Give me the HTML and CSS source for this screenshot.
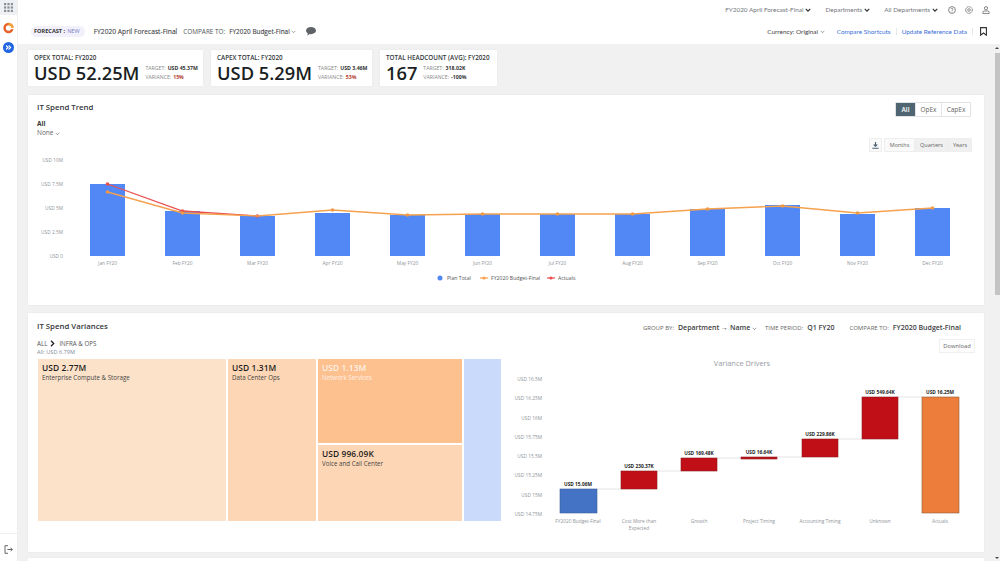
FILE: index.html
```html
<!DOCTYPE html>
<html lang="en">
<head>
<meta charset="utf-8">
<title>IT Spend</title>
<link rel="stylesheet" href="styles.css">
</head>
<body>
<div class="app">
  <aside class="side">
    <div class="side-top">
      <svg width="9" height="9" viewBox="0 0 9 9"><g fill="#8a8f98"><rect x="0" y="0" width="2.2" height="2.2"/><rect x="3.4" y="0" width="2.2" height="2.2"/><rect x="6.8" y="0" width="2.2" height="2.2"/><rect x="0" y="3.4" width="2.2" height="2.2"/><rect x="3.4" y="3.4" width="2.2" height="2.2"/><rect x="6.8" y="3.4" width="2.2" height="2.2"/><rect x="0" y="6.8" width="2.2" height="2.2"/><rect x="3.4" y="6.8" width="2.2" height="2.2"/><rect x="6.8" y="6.8" width="2.2" height="2.2"/></g></svg>
    </div>
    <svg class="logo" width="11" height="12" viewBox="0 0 11 12"><circle cx="5.500" cy="6" r="3.900" fill="none" stroke="#e8622c" stroke-width="2.500"/><path d="M5.500 2.100A3.900 3.900 0 0 1 9.400 6" fill="none" stroke="#f2a33a" stroke-width="2.500"/><path d="M7.500 6.500h3.500" stroke="#fff" stroke-width="1.200"/></svg>
    <svg class="go" width="11" height="11" viewBox="0 0 11 11"><circle cx="5.500" cy="5.500" r="5.500" fill="#1f64e0"/><path d="M3 3.500l2 2-2 2M5.600 3.500l2 2-2 2" fill="none" stroke="#fff" stroke-width="1.100"/></svg>
    <div class="side-foot">
      <svg width="9" height="9" viewBox="0 0 9 9"><path d="M4 .7H1v7.600h3" fill="none" stroke="#666" stroke-width="1"/><path d="M3.400 4.500h5M6.600 2.900l1.800 1.600-1.800 1.600" fill="none" stroke="#666" stroke-width="1"/></svg>
    </div>
  </aside>
  <div class="body">
    <header class="top">
      <nav class="top-row">
        <span class="nav-item">FY2020 April Forecast-Final <svg class="chev-b" viewBox="0 0 8 5"><path d="M1 1l3 3 3-3"/></svg></span>
        <span class="nav-item">Departments <svg class="chev-b" viewBox="0 0 8 5"><path d="M1 1l3 3 3-3"/></svg></span>
        <span class="nav-item">All Departments <svg class="chev-b" viewBox="0 0 8 5"><path d="M1 1l3 3 3-3"/></svg></span>
        <span class="nav-icons">
          <svg width="8" height="8" viewBox="0 0 8 8"><circle cx="4" cy="4" r="3.400" fill="none" stroke="#666" stroke-width=".8"/><path d="M3 3.200a1 1 0 1 1 1.400 1L4 4.800M4 5.600v.7" fill="none" stroke="#666" stroke-width=".7"/></svg>
          <svg width="8" height="8" viewBox="0 0 8 8"><circle cx="4" cy="4" r="3.300" fill="none" stroke="#777" stroke-width="1" stroke-dasharray="1.600 .5"/><circle cx="4" cy="4" r="1.300" fill="none" stroke="#777" stroke-width=".8"/></svg>
          <svg width="8" height="8" viewBox="0 0 8 8"><circle cx="4" cy="2.200" r="1.600" fill="none" stroke="#666" stroke-width=".8"/><path d="M.8 7.600V6.400q0-1.400 1.400-1.400h3.600q1.400 0 1.400 1.400v1.200z" fill="none" stroke="#666" stroke-width=".8"/></svg>
        </span>
      </nav>
      <div class="top-row2">
        <div class="ctx">
          <span class="pill"><b>FORECAST :</b> <em>NEW</em></span>
          <span class="ctx-name">FY2020 April Forecast-Final</span>
          <span class="ctx-label">COMPARE TO:</span>
          <span class="ctx-val">FY2020 Budget-Final <svg class="chev" viewBox="0 0 8 5"><path d="M1 1l3 3 3-3"/></svg></span>
          <svg class="bubble" width="10" height="9" viewBox="0 0 10 9"><path d="M5 0c2.800 0 5 1.600 5 3.600S7.800 7.200 5 7.200c-.5 0-1 0-1.500-.2L1.300 8.700l.5-2.300C.7 5.700 0 4.700 0 3.600 0 1.600 2.200 0 5 0z" fill="#5f6368"/></svg>
        </div>
        <div class="actions">
          <span class="currency">Currency: Original <svg class="chev" viewBox="0 0 8 5"><path d="M1 1l3 3 3-3"/></svg></span>
          <a class="link first">Compare Shortcuts</a>
          <a class="link sep">Update Reference Data</a>
          <svg class="bm" width="7" height="9" viewBox="0 0 7 9"><path d="M.6.6h5.800v7.600L3.500 6 .6 8.200z" fill="none" stroke="#333" stroke-width="1.100"/></svg>
        </div>
      </div>
    </header>
    <div class="view">
      <main class="content">
        <section class="kpis">
          <article class="kpi kpi-a">
            <h3>OPEX TOTAL: FY2020</h3>
            <div class="kpi-row"><strong>USD 52.25M</strong><dl><div><dt>TARGET:</dt><dd>USD 45.37M</dd></div><div><dt>VARIANCE:</dt><dd class="neg">15%</dd></div></dl></div>
          </article>
          <article class="kpi kpi-b">
            <h3>CAPEX TOTAL: FY2020</h3>
            <div class="kpi-row"><strong>USD 5.29M</strong><dl><div><dt>TARGET:</dt><dd>USD 3.46M</dd></div><div><dt>VARIANCE:</dt><dd class="neg">53%</dd></div></dl></div>
          </article>
          <article class="kpi kpi-c">
            <h3>TOTAL HEADCOUNT (AVG): FY2020</h3>
            <div class="kpi-row"><strong>167</strong><dl><div><dt>TARGET:</dt><dd>318.02K</dd></div><div><dt>VARIANCE:</dt><dd>-100%</dd></div></dl></div>
          </article>
        </section>

        <section class="panel trend">
          <div class="trend-head">
            <div class="trend-title">
              <h2>IT Spend Trend</h2>
              <div class="filter"><b>All</b><span>None <svg class="chev" viewBox="0 0 8 5"><path d="M1 1l3 3 3-3"/></svg></span></div>
            </div>
            <div class="trend-ctrl">
              <div class="seg"><span class="on">All</span><span class="s-op">OpEx</span><span class="s-cap">CapEx</span></div>
              <div class="time">
                <span class="dl"><svg width="7" height="7" viewBox="0 0 7 7"><path d="M3.500 0v4M1.700 2.500l1.800 1.800 1.800-1.800M.3 6.300h6.400" fill="none" stroke="#4c6473" stroke-width="1.100"/></svg></span>
                <span class="t-seg t-m">Months</span><span class="t-seg t-on t-q">Quarters</span><span class="t-seg t-on t-y">Years</span>
              </div>
            </div>
          </div>
          <svg class="chart" width="956" height="155" viewBox="28 150 956 155">
            <g class="ax" text-anchor="end">
              <text x="63" y="162">USD 10M</text><text x="63" y="186">USD 7.5M</text><text x="63" y="210">USD 5M</text><text x="63" y="234">USD 2.5M</text><text x="63" y="258">USD 0</text>
            </g>
            <g fill="#5288f5">
              <rect x="90" y="184" width="35" height="72"/><rect x="165" y="211" width="35" height="45"/><rect x="240" y="216" width="35" height="40"/><rect x="315" y="213" width="35" height="43"/><rect x="390" y="215" width="35" height="41"/><rect x="465" y="214" width="35" height="42"/><rect x="540" y="214" width="35" height="42"/><rect x="615" y="214" width="35" height="42"/><rect x="690" y="209" width="35" height="47"/><rect x="765" y="205" width="35" height="51"/><rect x="840" y="214" width="35" height="42"/><rect x="915" y="208" width="35" height="48"/>
            </g>
            <polyline points="107.500,184 182.500,211 257.500,216" fill="none" stroke="#e9504f" stroke-width="1.300"/>
            <g fill="#e9504f"><circle cx="107.500" cy="184" r="1.800"/><circle cx="182.500" cy="211" r="1.800"/><circle cx="257.500" cy="216" r="1.800"/></g>
            <polyline points="107.500,192 182.500,213 257.500,216 332.500,210 407.500,215 482.500,214 557.500,214 632.500,214 707.500,209 782.500,206 857.500,213 932.500,208" fill="none" stroke="#f5a14e" stroke-width="1.300"/>
            <g fill="#f09a45"><circle cx="107.500" cy="192" r="1.800"/><circle cx="182.500" cy="213" r="1.800"/><circle cx="332.500" cy="210" r="1.800"/><circle cx="407.500" cy="215" r="1.800"/><circle cx="482.500" cy="214" r="1.800"/><circle cx="557.500" cy="214" r="1.800"/><circle cx="632.500" cy="214" r="1.800"/><circle cx="707.500" cy="209" r="1.800"/><circle cx="782.500" cy="206" r="1.800"/><circle cx="857.500" cy="213" r="1.800"/><circle cx="932.500" cy="208" r="1.800"/></g>
            <g class="ax" text-anchor="middle">
              <text x="107.500" y="265">Jan FY20</text><text x="182.500" y="265">Feb FY20</text><text x="257.500" y="265">Mar FY20</text><text x="332.500" y="265">Apr FY20</text><text x="407.500" y="265">May FY20</text><text x="482.500" y="265">Jun FY20</text><text x="557.500" y="265">Jul FY20</text><text x="632.500" y="265">Aug FY20</text><text x="707.500" y="265">Sep FY20</text><text x="782.500" y="265">Oct FY20</text><text x="857.500" y="265">Nov FY20</text><text x="932.500" y="265">Dec FY20</text>
            </g>
            <circle cx="440" cy="278" r="2.500" fill="#5288f5"/>
            <path d="M480 278h8" stroke="#f5a14e" stroke-width="1.200"/><circle cx="484" cy="278" r="1.600" fill="#f5a14e"/>
            <path d="M547 278h8" stroke="#e9504f" stroke-width="1.200"/><circle cx="551" cy="278" r="1.600" fill="#e9504f"/>
            <g class="leg"><text x="447" y="280">Plan Total</text><text x="491" y="280">FY2020 Budget-Final</text><text x="558" y="280">Actuals</text></g>
          </svg>
        </section>

        <section class="panel var">
          <div class="var-head">
            <h2>IT Spend Variances</h2>
            <div class="var-opts">
              <span class="o-l">GROUP BY:</span><span class="o-v o-big">Department → Name <svg class="chev" viewBox="0 0 8 5"><path d="M1 1l3 3 3-3"/></svg></span>
              <span class="o-l o-gap">TIME PERIOD:</span><span class="o-v">Q1 FY20</span>
              <span class="o-l o-gap2">COMPARE TO:</span><span class="o-v">FY2020 Budget-Final</span>
            </div>
          </div>
          <div class="var-body">
            <div class="tree-col">
              <div class="crumb">ALL <svg class="crumb-c" viewBox="0 0 5 7"><path d="M1 .8l2.700 2.700L1 6.200"/></svg> <span>INFRA &amp; OPS</span></div>
              <div class="crumb-sub">All: USD 6.79M</div>
              <div class="tree">
                <div class="cell c1"><b>USD 2.77M</b><span>Enterprise Compute &amp; Storage</span></div>
                <div class="cell c2"><b>USD 1.31M</b><span>Data Center Ops</span></div>
                <div class="tree-stack">
                  <div class="cell c3"><b>USD 1.13M</b><span>Network Services</span></div>
                  <div class="cell c4"><b>USD 996.09K</b><span>Voice and Call Center</span></div>
                </div>
                <div class="cell c5"></div>
              </div>
            </div>
            <div class="wf-col">
              <div class="dl-row"><button class="dl-btn" type="button">Download</button></div>
              <svg class="chart" width="479" height="199" viewBox="505 353 479 199">
                <text class="wf-title" x="742" y="366" text-anchor="middle">Variance Drivers</text>
                <g class="ax" text-anchor="end">
                  <text x="542" y="381">USD 16.5M</text><text x="542" y="400">USD 16.25M</text><text x="542" y="420">USD 16M</text><text x="542" y="439">USD 15.75M</text><text x="542" y="458">USD 15.5M</text><text x="542" y="477">USD 15.25M</text><text x="542" y="497">USD 15M</text><text x="542" y="516">USD 14.75M</text>
                </g>
                <path d="M597 489h24M657 471h24M717 458h24M777 457h25M838 439h24M898 397h24" stroke="#ddd" stroke-width=".8"/>
                <rect x="560" y="489" width="37" height="24" fill="#4472c4" stroke="#3a5f9f" stroke-width=".6"/>
                <g fill="#c00f16" stroke="#8e1b1f" stroke-width=".6">
                  <rect x="621" y="471" width="36" height="18"/><rect x="681" y="458" width="36" height="13"/><rect x="741" y="457" width="36" height="2"/><rect x="802" y="439" width="36" height="18"/><rect x="862" y="397" width="36" height="42"/>
                </g>
                <rect x="922" y="397" width="37" height="116" fill="#ed7d3a" stroke="#8e5a3a" stroke-width=".6"/>
                <g class="wf-v" text-anchor="middle">
                  <text x="578" y="486">USD 15.06M</text><text x="639" y="468">USD 230.37K</text><text x="699" y="455">USD 169.48K</text><text x="759" y="454">USD 16.64K</text><text x="820" y="436">USD 229.86K</text><text x="880" y="394">USD 549.64K</text><text x="940" y="394">USD 16.25M</text>
                </g>
                <g class="ax" text-anchor="middle">
                  <text x="578" y="523">FY2020 Budget-Final</text><text x="639" y="523">Cost More than</text><text x="639" y="530">Expected</text><text x="699" y="523">Growth</text><text x="759" y="523">Project Timing</text><text x="820" y="523">Accounting Timing</text><text x="880" y="523">Unknown</text><text x="940" y="523">Actuals</text>
                </g>
              </svg>
            </div>
          </div>
        </section>
        <section class="panel next"></section>
      </main>
      <div class="sbar">
        <i class="arr up"></i>
        <div class="thumb"></div>
        <i class="arr down"></i>
      </div>
    </div>
  </div>
</div>
</body>
</html>
```
FILE: styles.css
```css
* { box-sizing: border-box; }
html, body { margin: 0; height: 100%; overflow: hidden; }
body { font-family: "Open Sans", "Liberation Sans", sans-serif; color: #2b2f33; background: #fff; }
h2, h3 { margin: 0; }
.app { display: flex; height: 561px; }

.side { width: 18px; flex: none; display: flex; flex-direction: column; align-items: center; background: #fff; border-right: 1px solid #eee; }
.side-top { width: 100%; height: 15px; background: #eef0f3; display: flex; align-items: center; justify-content: center; }
.logo { margin-top: 7px; }
.go { margin-top: 8px; }
.side-foot { margin-top: auto; width: 100%; height: 28px; border-top: 1px solid #eee; display: flex; align-items: center; justify-content: center; padding-top: 4px; }

.body { flex: 1; min-width: 0; display: flex; flex-direction: column; }
.top { height: 44px; flex: none; background: #fff; font-family: Lato, "Liberation Sans", sans-serif; }
.top-row { height: 19px; display: flex; align-items: center; justify-content: flex-end; padding-right: 10px; font-size: 6.400px; color: #73777c; }
.nav-item { margin-left: 14px; display: inline-flex; align-items: center; gap: 2px; }
.chev-b { width: 6px; height: 4px; fill: none; stroke: #333; stroke-width: 1.600; }
.nav-icons { display: inline-flex; gap: 9px; margin-left: 10px; }
.nav-icons svg { display: block; }
.top-row2 { height: 25px; display: flex; align-items: flex-start; justify-content: space-between; padding: 5px 13px 0 13px; }
.ctx, .actions { display: flex; align-items: center; height: 14px; white-space: nowrap; }
.pill { background: #f2f0fa; border-radius: 7px; padding: 0 5px 0 3px; height: 11px; font: 5.600px/11px "Open Sans", sans-serif; display: inline-flex; gap: 2px; color: #333; }
.pill b { font-weight: 700; }
.pill em { font-style: normal; color: #7b7fc9; }
.ctx-name { font: 6.700px "Open Sans", sans-serif; -webkit-text-stroke: .1px #3c4043; margin-left: 9px; color: #3c4043; }
.ctx-label { font: 6.400px "Open Sans", sans-serif; margin-left: 6px; color: #50555a; }
.ctx-val { font: 6.400px "Open Sans", sans-serif; -webkit-text-stroke: .1px #3c4043; margin-left: 4px; color: #3c4043; }
.chev { width: 5px; height: 3.500px; fill: none; stroke: #666; stroke-width: 1; }
.bubble { margin-left: 10px; }
.currency { font-size: 6.400px; color: #3c4043; margin-right: 12px; }
.link { font-size: 6.400px; color: #3b6fd8; padding-right: 5px; border-right: 1px solid #e8e8e8; }
.first { margin-right: 5px; }
.sep { margin-right: 7px; }
.bm { display: block; }

.view { flex: 1; min-height: 0; display: flex; background: #f1f1f1; }
.content { flex: 1; min-width: 0; padding: 6px 10px 0; overflow: hidden; }

.kpis { display: flex; gap: 8px; height: 36px; }
.kpi { background: #fff; padding: 3px 5px 0 6px; box-shadow: 0 0 2px rgba(0,0,0,.06); }
.kpi-a { width: 175px; }
.kpi-b { width: 161px; }
.kpi-c { width: 117px; }
.kpi h3 { font-size: 6.300px; line-height: 9px; font-weight: 600; color: #33373b; white-space: nowrap; }
.kpi-row { display: flex; align-items: center; gap: 6px; height: 20px; margin-top: 1px; }
.kpi strong { font-size: 18.300px; line-height: 20px; font-weight: 600; color: #1b1f23; white-space: nowrap; }
.kpi dl { margin: 0; font-size: 5.200px; line-height: 9px; }
.kpi dl div { display: flex; gap: 2px; white-space: nowrap; }
.kpi dt { color: #888; }
.kpi dd { margin: 0; font-weight: 700; color: #333; }
.kpi dd.neg { color: #b5412f; }

.panel { background: #fff; box-shadow: 0 0 2px rgba(0,0,0,.05); }
.panel h2 { font-size: 7.800px; font-weight: 600; color: #33373b; line-height: 12px; white-space: nowrap; }
.trend { margin-top: 9px; height: 210px; }
.trend-head { height: 55px; display: flex; justify-content: space-between; padding: 6px 12px 0 9px; }
.filter { margin-top: 6px; display: flex; flex-direction: column; font-size: 6.500px; line-height: 9px; color: #666; }
.filter b { font-weight: 700; color: #333; }
.trend-ctrl { display: flex; flex-direction: column; align-items: flex-end; }
.seg { display: flex; height: 15px; margin-top: 1px; margin-right: 1px; border: 1px solid #dfe3e6; border-radius: 1px; font-size: 6.500px; color: #666; }
.seg span { text-align: center; line-height: 13px; border-left: 1px solid #e4e7e9; }
.seg .on { width: 19px; background: #4f6672; color: #fff; font-weight: 600; border-left: 0; }
.seg .s-op { width: 26px; }
.seg .s-cap { width: 29px; }
.time { display: flex; height: 14px; margin-top: 21px; font-size: 5.500px; color: #666; }
.dl { width: 13px; display: flex; align-items: center; justify-content: center; background: #fafafa; border: 1px solid #eee; margin-right: 2px; }
.t-seg { text-align: center; line-height: 12px; border: 1px solid #eee; background: #fafafa; }
.t-m { width: 31px; }
.t-q { width: 33px; }
.t-y { width: 24px; }
.t-on { background: #f0f0f0; }
.chart { display: block; }
.ax text, .ax { font-size: 4.800px; fill: #8f9498; }
.leg text { font-size: 5.200px; fill: #555; }

.var { margin-top: 8px; height: 239px; position: relative; }
.var-head { height: 22px; display: flex; justify-content: space-between; align-items: flex-end; padding: 0 23px 0 9px; }
.var-head h2 { margin-bottom: 3px; }
.var-opts { display: flex; align-items: center; margin-bottom: 3px; white-space: nowrap; }
.o-l { font-size: 6px; color: #666; margin-right: 4px; }
.o-v { font-size: 7px; font-weight: 600; color: #3c4043; }
.o-gap { margin-left: 8px; }
.o-gap2 { margin-left: 15px; }
.var-body { display: flex; padding-left: 10px; }
.tree-col { width: 463px; flex: none; padding-top: 3px; }
.crumb { font-size: 6.200px; line-height: 9px; color: #555; display: flex; align-items: center; gap: 3px; height: 10px; margin-left: -1px; }
.crumb span { margin-left: 1px; }
.crumb-c { width: 5px; height: 7px; fill: none; stroke: #222; stroke-width: 1.300; }
.crumb-sub { font-size: 5.600px; line-height: 8px; color: #7d8a99; margin-left: -1px; }
.tree { display: flex; gap: 2px; height: 162px; margin-top: 3px; }
.tree-stack { width: 144px; display: flex; flex-direction: column; gap: 2px; }
.cell { padding: 4px; display: flex; flex-direction: column; }
.cell b { font-size: 8.400px; line-height: 10px; font-weight: 600; color: #1e1e1e; letter-spacing: .1px; }
.cell span { font-size: 6.200px; line-height: 9px; color: #444; white-space: nowrap; }
.c1 { width: 188px; background: #fde2ca; }
.c2 { width: 88px; background: #fdd7b5; }
.c3 { height: 84px; background: #fdc08f; }
.c3 b, .c3 span { color: #fdf1e6; }
.c4 { flex: 1; background: #fdd7b5; }
.c5 { width: 37px; background: #c9dafb; }
.wf-col { width: 479px; flex: none; margin-left: 4px; }
.dl-row { height: 18px; display: flex; justify-content: flex-end; padding: 4px 9px 0 0; }
.dl-btn { width: 36px; height: 14px; padding: 0; background: #fdfdfd; border: 1px solid #eef0f2; font: 5.800px "Open Sans", sans-serif; color: #666; }
.wf-title { font-size: 7.400px; fill: #979b9f; }
.wf-v text { font-size: 4.800px; font-weight: 700; fill: #1c1c1c; }
.next { margin-top: 6px; height: 40px; }

.sbar { width: 6px; flex: none; background: #f1f1f1; display: flex; flex-direction: column; align-items: center; }
.thumb { width: 5px; height: 242px; margin-top: 4px; background: #c4c4c4; align-self: flex-end; }
.arr { display: block; width: 0; height: 0; border-left: 2px solid transparent; border-right: 2px solid transparent; }
.up { border-bottom: 2px solid #444; margin-top: 3px; }
.down { border-top: 2px solid #444; margin-top: auto; margin-bottom: 2px; }
```
